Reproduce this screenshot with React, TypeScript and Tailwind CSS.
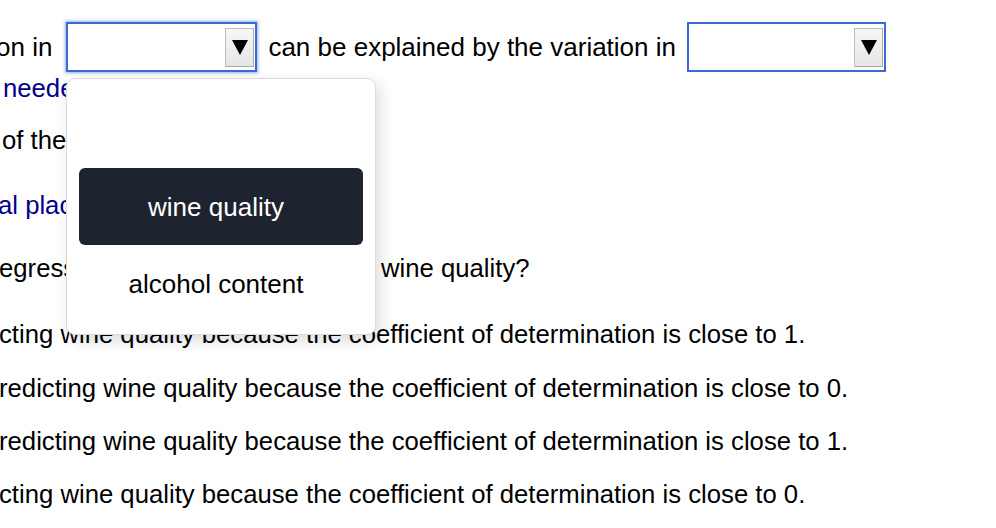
import React from "react";

function SelectBox({ width, focused }: { width: string; focused?: boolean }) {
  return (
    <div
      className={`relative flex h-[50px] ${width} shrink-0 items-center justify-end border-2 border-[#3a6bd2] bg-white pr-[1px] ${
        focused ? "shadow-[0_0_3px_1px_rgba(58,107,210,0.55)]" : ""
      }`}
    >
      <div className="flex h-[39px] w-[29px] items-center justify-center border border-[#bdbdbd] border-b-[#a9a9a9] border-r-[#a9a9a9] bg-gradient-to-b from-[#f7f7f7] to-[#e6e6e6]">
        <svg width="18" height="18" viewBox="0 0 18 18">
          <polygon points="1,2 17,2 9,17" fill="#000" />
        </svg>
      </div>
    </div>
  );
}

const answers = [
  { text: "cting wine quality because the coefficient of determination is close to 1.", mt: "mt-[36px]" },
  { text: "redicting wine quality because the coefficient of determination is close to 0.", mt: "mt-[24px]" },
  { text: "redicting wine quality because the coefficient of determination is close to 1.", mt: "mt-[23px]" },
  { text: "cting wine quality because the coefficient of determination is close to 0.", mt: "mt-[23px]" },
];

export default function App() {
  return (
    <div className="relative h-[528px] w-[996px] overflow-hidden bg-white text-[25.7px] leading-[30px] text-black [font-family:'Liberation_Sans',Arial,sans-serif]">
      {/* Question text */}
      <div className="flex flex-col pt-[22px]">
        <div className="flex h-[50px] items-center whitespace-nowrap text-[26px]">
          <span className="-ml-[4px]">on in</span>
          <div className="ml-[14px]">
            <SelectBox width="w-[191px]" focused />
          </div>
          <span className="ml-[11px]">can be explained by the variation in</span>
          <div className="ml-[11px]">
            <SelectBox width="w-[199px]" />
          </div>
        </div>

        <div className="mt-[1px] whitespace-nowrap pl-[3px] text-[#00008b]">needed.)</div>
        <div className="mt-[22px] whitespace-nowrap pl-[2px]">of the regression line.</div>
        <div className="mt-[35px] whitespace-nowrap -ml-[2px] text-[#00008b]">al places as needed.)</div>
        <div className="mt-[33px] flex whitespace-nowrap">
          <span className="-ml-[1px] w-[382px] overflow-hidden">egression</span>
          <span>wine quality?</span>
        </div>

        {answers.map((a, i) => (
          <div key={i} className={`${a.mt} whitespace-nowrap -ml-[1px]`}>
            {a.text}
          </div>
        ))}
      </div>

      {/* Open dropdown menu */}
      <div className="absolute left-[66px] top-[78px] w-[310px] rounded-[9px] border border-[#dadada] bg-white p-[12px] text-[26px] shadow-[4px_6px_16px_rgba(0,0,0,0.14)]">
        <div className="h-[77px]" />
        <div className="flex h-[77px] items-center justify-center rounded-[6px] bg-[#1e2330] pr-[10px] text-white">
          wine quality
        </div>
        <div className="flex h-[77px] items-center justify-center pr-[10px]">alcohol content</div>
      </div>
    </div>
  );
}
